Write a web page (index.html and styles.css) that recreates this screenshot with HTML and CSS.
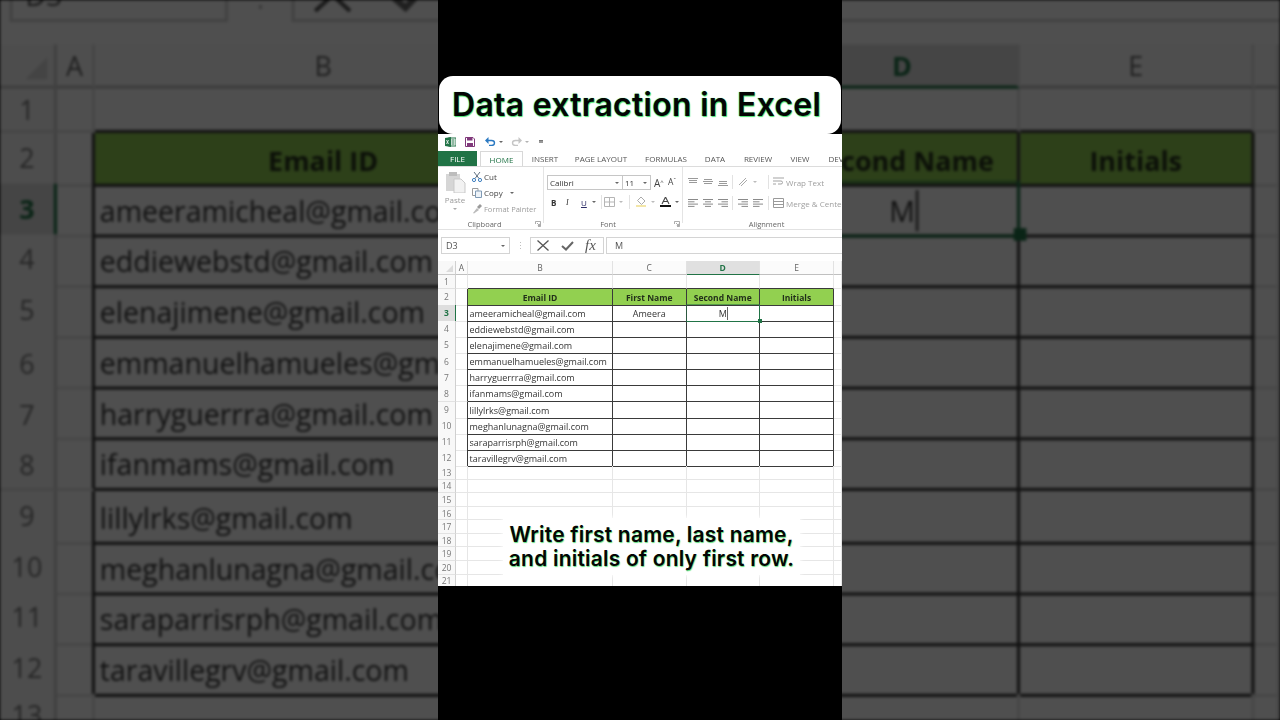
FILE: index.html
```html
<!DOCTYPE html>
<html lang="en">
<head>
<meta charset="utf-8">
<title>Data extraction in Excel</title>
<link rel="stylesheet" href="styles.css">
</head>
<body>
<svg class="defs" width="0" height="0" aria-hidden="true">
  <symbol id="al-l" viewBox="0 0 10 8"><path d="M0 .5h10M0 2.8h6.5M0 5.1h10M0 7.4h6.5" stroke="#8a8a8a" fill="none"/></symbol>
  <symbol id="al-c" viewBox="0 0 10 8"><path d="M0 .5h10M2 2.8h6M0 5.1h10M2 7.4h6" stroke="#8a8a8a" fill="none"/></symbol>
  <symbol id="al-r" viewBox="0 0 10 8"><path d="M0 .5h10M3.5 2.8h6.5M0 5.1h10M3.5 7.4h6.5" stroke="#8a8a8a" fill="none"/></symbol>
  <symbol id="va-t" viewBox="0 0 10 8"><path d="M0 .5h10M1 2.5h8M1 4.5h8" stroke="#9a9a9a" fill="none"/></symbol>
  <symbol id="va-m" viewBox="0 0 10 8"><path d="M1 1.5h8M0 3.5h10M1 5.5h8" stroke="#9a9a9a" fill="none"/></symbol>
  <symbol id="va-b" viewBox="0 0 10 8"><path d="M1 3.5h8M1 5.5h8M0 7.5h10" stroke="#9a9a9a" fill="none"/></symbol>
  <symbol id="launch" viewBox="0 0 6 6"><path d="M.5 3V.5H5.5V5.5H3M2 2l2.500 2.500M4.500 2.800V4.500H2.800" stroke="#8a8a8a" stroke-width=".7" fill="none"/></symbol>
</svg>

<div class="backdrop"></div>

<main class="stage">
  <header class="title-card"><h1 class="title">Data extraction in Excel</h1></header>

  <section class="excel" id="excel">
    <div class="qat">
      <svg class="q-xl" viewBox="0 0 11 10"><rect x="4" y="1" width="7" height="8" fill="#fff" stroke="#217346"/><path d="M6.500 3h3M6.500 5h3M6.500 7h3" stroke="#217346"/><path d="M0 1l6-1v10l-6-1z" fill="#217346"/><path d="M1.500 3l2 4M3.500 3l-2 4" stroke="#fff" stroke-width=".8"/></svg>
      <svg class="q-save" viewBox="0 0 10 10"><path d="M.5.500h7.500l1.500 1.500v7.500h-9z" fill="#fff" stroke="#80397b"/><rect x="2" y=".5" width="5.500" height="3" fill="#80397b"/><rect x="2" y="6" width="6" height="3.500" fill="#80397b"/></svg>
      <svg class="q-undo" viewBox="0 0 11 9"><path d="M1.500 3.500h5a3 2.500 0 0 1 0 5H4" fill="none" stroke="#2b79c2" stroke-width="1.400"/><path d="M0 3.500L3.500 0v7z" fill="#2b79c2"/></svg>
      <i class="mini-arrow q-a1"></i>
      <svg class="q-redo" viewBox="0 0 11 9"><path d="M9.500 3.500h-5a3 2.500 0 0 0 0 5H7" fill="none" stroke="#c5c5c5" stroke-width="1.400"/><path d="M11 3.500L7.500 0v7z" fill="#c5c5c5"/></svg>
      <i class="mini-arrow q-a2"></i>
      <span class="q-cust"></span>
    </div>

    <nav class="tabs">
      <span class="tab file">FILE</span>
      <span class="tab home">HOME</span>
      <span class="tab t-ins">INSERT</span>
      <span class="tab t-pl">PAGE LAYOUT</span>
      <span class="tab t-fm">FORMULAS</span>
      <span class="tab t-da">DATA</span>
      <span class="tab t-re">REVIEW</span>
      <span class="tab t-vi">VIEW</span>
      <span class="tab t-de">DEVELOPER</span>
    </nav>

    <div class="ribbon">
      <div class="group g-clip">
        <div class="g-body clip-body">
          <div class="paste">
            <svg class="paste-ic" viewBox="0 0 21 21"><rect x="1" y="2" width="14" height="17" fill="#d6d6d6"/><rect x="4" y="0" width="8" height="4" fill="#bdbdbd"/><path d="M9 7h7l4 4v10H9z" fill="#f2f2f2" stroke="#c9c9c9"/></svg>
            <span class="paste-t">Paste</span>
            <i class="mini-arrow"></i>
          </div>
          <div class="clip-list">
            <div class="clip-item">
              <svg class="ci" viewBox="0 0 10 10"><path d="M2 0l5 6.500M8 0L3 6.500" stroke="#5f6f80" fill="none"/><circle cx="2" cy="8" r="1.600" stroke="#3f7fbf" fill="none"/><circle cx="8" cy="8" r="1.600" stroke="#3f7fbf" fill="none"/></svg>
              <span>Cut</span>
            </div>
            <div class="clip-item">
              <svg class="ci" viewBox="0 0 10 10"><path d="M.5.500h5.500v7h-5.500z" fill="#fff" stroke="#9a9a9a"/><path d="M3.500 3h6v6.500h-6z" fill="#eef3f8" stroke="#7f9ab5"/></svg>
              <span>Copy</span><i class="mini-arrow copy-a"></i>
            </div>
            <div class="clip-item dim">
              <svg class="ci" viewBox="0 0 10 10"><path d="M1 9l4-5 2 2-5 3.500z" fill="#bbb"/><path d="M5 3l3-3 2 2-3 3z" fill="#9a9a9a"/></svg>
              <span>Format Painter</span>
            </div>
          </div>
        </div>
        <div class="g-label l-clip">Clipboard<svg class="launch"><use href="#launch"/></svg></div>
      </div>

      <div class="group g-font">
        <div class="g-body font-body">
          <div class="font-row one">
            <span class="combo c-font">Calibri<i class="mini-arrow"></i></span>
            <span class="combo c-size">11<i class="mini-arrow"></i></span>
            <span class="grow">A<sup>^</sup></span>
            <span class="grow small">A<sup>ˇ</sup></span>
          </div>
          <div class="font-row two">
            <b class="fb">B</b><em class="fb fi">I</em><u class="fb fu">U</u><i class="mini-arrow"></i>
            <span class="vsep v-a"></span>
            <svg class="fi-ic" viewBox="0 0 11 10"><path d="M.5.500h10v9H.5zM5.500.500v9M.5 5h10" stroke="#b5b5b5" fill="none"/></svg><i class="mini-arrow pale"></i>
            <span class="vsep v-b"></span>
            <svg class="fi-ic" viewBox="0 0 11 10"><path d="M5 0l4 4-3.500 3.500-4-4z" fill="none" stroke="#aaa"/><rect y="8" width="10" height="2" fill="#f3e6a8"/></svg><i class="mini-arrow pale"></i>
            <svg class="fi-ic color-ic" viewBox="0 0 11 10"><path d="M2 7l3.500-7L9 7M3.500 4.500h4" fill="none" stroke="#444" stroke-width="1.100"/><rect y="8" width="11" height="2" fill="#111"/></svg><i class="mini-arrow"></i>
          </div>
        </div>
        <div class="g-label l-font">Font<svg class="launch"><use href="#launch"/></svg></div>
      </div>

      <div class="group g-align">
        <div class="g-body align-body">
          <div class="al-row">
            <svg class="al"><use href="#va-t"/></svg><svg class="al"><use href="#va-m"/></svg><svg class="al"><use href="#va-b"/></svg>
            <span class="vsep"></span>
            <svg class="fi-ic" viewBox="0 0 11 10"><path d="M1 8l7-7M3 9l6-6" stroke="#a9a9a9" fill="none"/></svg><i class="mini-arrow pale"></i>
            <span class="vsep s2"></span>
            <svg class="fi-ic" viewBox="0 0 11 10"><path d="M0 1h11M0 4h8a1.500 1.500 0 0 1 0 3H5M0 7h3" stroke="#a3a3a3" fill="none"/></svg>
            <span class="al-t">Wrap Text</span>
          </div>
          <div class="al-row">
            <svg class="al"><use href="#al-l"/></svg><svg class="al"><use href="#al-c"/></svg><svg class="al"><use href="#al-r"/></svg>
            <span class="vsep"></span>
            <svg class="al ind"><use href="#al-r"/></svg><svg class="al ind"><use href="#al-l"/></svg>
            <span class="vsep s3"></span>
            <svg class="fi-ic" viewBox="0 0 11 10"><path d="M.5.500h10v9H.5zM.5 3.500h10M.5 6.500h10" stroke="#9a9a9a" fill="none"/></svg>
            <span class="al-t">Merge &amp; Center</span>
          </div>
        </div>
        <div class="g-label l-align">Alignment</div>
      </div>
    </div>

    <div class="fbar">
      <div class="namebox">D3<i class="mini-arrow"></i></div>
      <span class="dots">⋮</span>
      <div class="fx-box">
        <svg class="fx-x" viewBox="0 0 12 11"><path d="M.5.500l11 10M11.500.500l-11 10" stroke="#555" stroke-width="1.300" fill="none"/></svg>
        <svg class="fx-v" viewBox="0 0 13 10"><path d="M1 5l4 3.500L12 1" stroke="#666" stroke-width="2" fill="none"/></svg>
        <span class="fx-f">fx</span>
      </div>
      <div class="formula">M</div>
    </div>

    <div class="sheet">
      <div class="row colhead">
        <span class="rh corner"><i></i></span><span class="ch">A</span><span class="ch">B</span><span class="ch">C</span><span class="ch on">D</span><span class="ch">E</span><span class="ch"></span>
      </div>
      <div class="row r1"><span class="rh">1</span><span class="c"></span><span class="c tb"></span><span class="c tb"></span><span class="c tb"></span><span class="c tb"></span><span class="c"></span></div>
      <div class="row r2"><span class="rh">2</span><span class="c tl"></span><span class="c t hd">Email ID</span><span class="c t hd">First Name</span><span class="c t hd">Second Name</span><span class="c t hd">Initials</span><span class="c"></span></div>
      <div class="row rd"><span class="rh on">3</span><span class="c tl"></span><span class="c t">ameeramicheal@gmail.com</span><span class="c t mid">Ameera</span><span class="c t mid sel">M<i class="caret"></i></span><span class="c t"></span><span class="c"></span></div>
      <div class="row rd"><span class="rh">4</span><span class="c tl"></span><span class="c t">eddiewebstd@gmail.com</span><span class="c t"></span><span class="c t"></span><span class="c t"></span><span class="c"></span></div>
      <div class="row rd"><span class="rh">5</span><span class="c tl"></span><span class="c t">elenajimene@gmail.com</span><span class="c t"></span><span class="c t"></span><span class="c t"></span><span class="c"></span></div>
      <div class="row rd"><span class="rh">6</span><span class="c tl"></span><span class="c t">emmanuelhamueles@gmail.com</span><span class="c t"></span><span class="c t"></span><span class="c t"></span><span class="c"></span></div>
      <div class="row rd"><span class="rh">7</span><span class="c tl"></span><span class="c t">harryguerrra@gmail.com</span><span class="c t"></span><span class="c t"></span><span class="c t"></span><span class="c"></span></div>
      <div class="row rd"><span class="rh">8</span><span class="c tl"></span><span class="c t">ifanmams@gmail.com</span><span class="c t"></span><span class="c t"></span><span class="c t"></span><span class="c"></span></div>
      <div class="row rd"><span class="rh">9</span><span class="c tl"></span><span class="c t">lillylrks@gmail.com</span><span class="c t"></span><span class="c t"></span><span class="c t"></span><span class="c"></span></div>
      <div class="row rd"><span class="rh">10</span><span class="c tl"></span><span class="c t">meghanlunagna@gmail.com</span><span class="c t"></span><span class="c t"></span><span class="c t"></span><span class="c"></span></div>
      <div class="row rd"><span class="rh">11</span><span class="c tl"></span><span class="c t">saraparrisrph@gmail.com</span><span class="c t"></span><span class="c t"></span><span class="c t"></span><span class="c"></span></div>
      <div class="row rd"><span class="rh">12</span><span class="c tl"></span><span class="c t">taravillegrv@gmail.com</span><span class="c t"></span><span class="c t"></span><span class="c t"></span><span class="c"></span></div>
      <div class="row re"><span class="rh">13</span><span class="c"></span><span class="c"></span><span class="c"></span><span class="c"></span><span class="c"></span><span class="c"></span></div>
      <div class="row re"><span class="rh">14</span><span class="c"></span><span class="c"></span><span class="c"></span><span class="c"></span><span class="c"></span><span class="c"></span></div>
      <div class="row re"><span class="rh">15</span><span class="c"></span><span class="c"></span><span class="c"></span><span class="c"></span><span class="c"></span><span class="c"></span></div>
      <div class="row re"><span class="rh">16</span><span class="c"></span><span class="c"></span><span class="c"></span><span class="c"></span><span class="c"></span><span class="c"></span></div>
      <div class="row re"><span class="rh">17</span><span class="c"></span><span class="c"></span><span class="c"></span><span class="c"></span><span class="c"></span><span class="c"></span></div>
      <div class="row re"><span class="rh">18</span><span class="c"></span><span class="c"></span><span class="c"></span><span class="c"></span><span class="c"></span><span class="c"></span></div>
      <div class="row re"><span class="rh">19</span><span class="c"></span><span class="c"></span><span class="c"></span><span class="c"></span><span class="c"></span><span class="c"></span></div>
      <div class="row re"><span class="rh">20</span><span class="c"></span><span class="c"></span><span class="c"></span><span class="c"></span><span class="c"></span><span class="c"></span></div>
      <div class="row re"><span class="rh">21</span><span class="c"></span><span class="c"></span><span class="c"></span><span class="c"></span><span class="c"></span><span class="c"></span></div>
    </div>
  </section>

  <p class="caption">Write first name, last name,<br>and initials of only first row.</p>
</main>
<script src="script.js"></script>
</body>
</html>
```

FILE: styles.css
```css
* { box-sizing: border-box; }
html, body { margin: 0; height: 100%; }
body {
  width: 1280px; height: 720px; overflow: hidden; background: #000;
  display: flex; justify-content: center;
  font-family: "Open Sans", "Liberation Sans", sans-serif;
  position: relative;
}
.defs { position: absolute; }

/* blurred, darkened enlargement of the sheet behind the video */
.backdrop {
  position: absolute; inset: 0; overflow: hidden; background: #4f4f4f;
  filter: brightness(.31) blur(1.6px);
}
.backdrop .excel {
  position: absolute; left: 0; top: 0;
  transform-origin: 0 0;
  transform: scale(3.168) translateY(-113px);
  filter: none;
}

.stage {
  position: relative; width: 404px; height: 720px; background: #000;
  padding-top: 76px; display: flex; flex-direction: column;
}
.title-card {
  margin: 0 1px; height: 58px; background: #fff; border-radius: 14px;
  display: flex; align-items: center; padding-left: 13px; flex: none;
  position: relative; z-index: 1;
}
.title {
  margin: 0; font: 600 32px/1 "Inter", sans-serif; letter-spacing: .27px; color: #050505; white-space: nowrap;
  text-shadow: .6px .6px 1px #45e36d, -.4px 0 1px #45e36d;
}

.excel {
  width: 404px; height: 452px; background: #fff; overflow: hidden; flex: none;
  display: flex; flex-direction: column; color: #444;
  filter: blur(.4px);
}

/* quick access */
.qat { height: 17px; display: flex; align-items: center; flex: none; padding: 0 0 2px 7px; }
.qat svg { display: block; flex: none; }
.q-xl { width: 11px; height: 10px; }
.q-save { width: 10px; height: 10px; margin-left: 9px; }
.q-undo { width: 11px; height: 9px; margin-left: 10px; }
.q-a1 { margin-left: 3px; }
.q-redo { width: 11px; height: 9px; margin-left: 8px; }
.q-a2 { margin-left: 3px; opacity: .5; }
.q-cust { width: 4px; height: 3px; margin-left: 10px; border-top: 1px solid #777; border-bottom: 2px solid #999; }
.mini-arrow {
  display: inline-block; width: 0; height: 0; flex: none;
  border-left: 2px solid transparent; border-right: 2px solid transparent; border-top: 2px solid #666;
}
.mini-arrow.pale { border-top-color: #bbb; }

/* tabs */
.tabs {
  height: 16px; flex: none; display: flex; align-items: stretch; white-space: nowrap;
  border-bottom: 1px solid #dcdcdc; overflow: hidden; font-size: 8px; color: #555;
}
.tab { display: flex; align-items: center; justify-content: center; flex: none; }
.file { width: 39px; background: #217346; color: #fff; }
.home {
  width: 43px; margin-left: 3px; background: #fff; color: #217346;
  border: 1px solid #d8d8d8; border-bottom: 0; height: 16px;
}
.t-ins { margin-left: 10px; width: 24px; }
.t-pl { margin-left: 19px; width: 50px; }
.t-fm { margin-left: 19px; width: 42px; }
.t-da { margin-left: 18px; width: 20px; }
.t-re { margin-left: 19px; width: 28px; }
.t-vi { margin-left: 19px; width: 18px; }
.t-de { margin-left: 19px; width: 45px; }

/* ribbon */
.ribbon { height: 63px; flex: none; display: flex; border-bottom: 1px solid #e2e2e2; font-size: 8px; }
.group { position: relative; display: flex; flex-direction: column; flex: none; padding-top: 4px; border-right: 1px solid #e4e4e4; margin-bottom: 7px; height: 56px; }
.g-body { flex: 1; }
.g-label {
  position: absolute; left: 0; right: 0; top: 51px; text-align: center; font-size: 7.5px; line-height: 12px; color: #666;
}
.l-clip { padding-right: 12px; }
.l-font { padding-right: 10px; }
.l-align { padding-left: 8px; }
.launch { position: absolute; right: 2px; top: 3px; width: 6px; height: 6px; }
.g-clip { width: 106px; }
.clip-body { display: flex; }
.paste { width: 34px; display: flex; flex-direction: column; align-items: center; color: #9a9a9a; font-size: 8px; }
.paste-ic { width: 21px; height: 21px; margin-top: 1px; }
.paste-t { margin-top: 1px; line-height: 11px; }
.paste .mini-arrow { margin-top: 3px; border-top-color: #aaa; }
.clip-list { display: flex; flex-direction: column; gap: 5px; }
.clip-item { display: flex; align-items: center; gap: 2px; height: 11px; }
.clip-item .ci { width: 10px; height: 10px; flex: none; }
.clip-item.dim { color: #9c9c9c; }
.clip-item.dim span { font-size: 7.5px; }
.copy-a { margin-left: 5px; }

.g-font { width: 139px; }
.font-body { padding-left: 3px; }
.font-row { display: flex; align-items: center; }
.font-row.one { height: 15px; margin-top: 4px; }
.font-row.two { margin-top: 5px; height: 14px; padding-left: 4px; }
.combo {
  height: 15px; border: 1px solid #c6c6c6; display: flex; align-items: center;
  justify-content: space-between; padding: 0 3px 0 2px; color: #333;
}
.c-font { width: 76px; }
.c-size { width: 28px; border-left: 0; }
.grow { font-size: 10px; line-height: 1; margin-left: 3px; width: 11px; color: #444; white-space: nowrap; }
.grow sup { font-size: 6px; vertical-align: 3px; line-height: 0; }
.grow.small { font-size: 8.5px; margin-left: 3px; }
.fb { font-size: 8px; color: #333; width: 15px; text-align: left; font-style: normal; }
.fi { font-style: italic; font-family: "Liberation Serif", serif; }
.fu { width: 11px; color: #2c2c66; }
.vsep { width: 1px; height: 14px; background: #e2e2e2; margin: 0 5px 0 6px; flex: none; }
.v-a { margin: 0 2px 0 5px; }
.v-b { margin: 0 6px 0 6px; }
.fi-ic { width: 11px; height: 10px; flex: none; margin-right: 4px; display: block; }
.color-ic { margin-left: 5px; }

.g-align { width: 159px; border-right: 0; }
.align-body { padding: 0 0 0 5px; display: flex; flex-direction: column; gap: 7px; margin-top: 4px; }
.al-row { display: flex; align-items: center; height: 14px; color: #a0a0a0; white-space: nowrap; }
.al { width: 10px; height: 8px; margin-right: 5px; flex: none; display: block; }
.al-row > .vsep { margin: 0 5px 0 -1px; }
.al-row > .vsep.s2 { margin: 0 4px 0 11px; }
.al-row > .vsep.s3 { margin: 0 4px 0 0; }
.al-t { margin-left: -2px; font-size: 8px; }

/* formula bar */
.fbar { margin-top: 7px; height: 17px; flex: none; display: flex; align-items: stretch; padding-left: 3px; font-size: 9px; color: #555; }
.namebox { width: 69px; border: 1px solid #d4d4d4; display: flex; align-items: center; justify-content: space-between; padding: 0 4px; }
.dots { width: 20px; text-align: center; color: #bbb; line-height: 17px; }
.fx-box { width: 74px; border: 1px solid #d4d4d4; display: flex; align-items: center; padding-left: 6px; }
.fx-x { width: 12px; height: 11px; }
.fx-v { width: 13px; height: 10px; margin-left: 12px; }
.fx-f { font: italic 15px "Liberation Serif", serif; color: #555; margin-left: 11px; }
.formula { flex: 1; margin-left: 2px; border: 1px solid #d4d4d4; border-right: 0; padding-left: 8px; display: flex; align-items: center; }

/* sheet */
.sheet { margin-top: 7px; flex: 1; overflow: hidden; }
.row { display: grid; grid-template-columns: 18px 12px 145px 73.500px 73.500px 74px 1fr; }
.colhead { height: 14px; }
.r1 { height: 13.700px; }
.r2 { height: 16px; }
.rd { height: 16.150px; }
.re { height: 13.570px; }
.rh { background: #f8f8f8; border-right: 1px solid #d0d0d0; border-bottom: 1px solid #e2e2e2; font-size: 8.500px; color: #777; display: flex; align-items: center; justify-content: center; }
.rh.on { background: #dedede; color: #217346; font-weight: 700; border-right: 1px solid #217346; }
.corner { position: relative; border-bottom: 1px solid #c8c8c8; }
.corner i { position: absolute; right: 2px; bottom: 2px; width: 0; height: 0; border-left: 7px solid transparent; border-bottom: 7px solid #dcdcdc; }
.ch { background: #fbfbfb; border-right: 1px solid #e2e2e2; border-bottom: 1px solid #c0c0c0; font-size: 8.500px; color: #666; text-align: center; line-height: 13px; }
.ch.on { background: #e0e0e0; color: #217346; font-weight: 700; border-bottom: 1px solid #217346; }
.c {
  border-right: 1px solid #e6e6e6; border-bottom: 1px solid #e6e6e6; font-size: 9px; color: #333;
  padding-left: 1.500px; line-height: 15px; white-space: nowrap; min-width: 0; position: relative;
}
.c.tb { border-bottom-color: #3a3a3a; }
.c.tl { border-right-color: #3a3a3a; }
.c.t { border-right-color: #3a3a3a; border-bottom-color: #3a3a3a; padding-top: 1px; }
.c.hd { background: #92d050; font-weight: 700; text-align: center; font-size: 8.500px; padding: 1px 0 0; color: #22301a; }
.c.mid { text-align: center; padding-left: 0; }
.sel { z-index: 2; }
.sel::after { content: ""; position: absolute; inset: -1px -1px -1px -1px; border: 1px solid rgba(33,115,70,.55); border-bottom: 1.500px solid #217346; border-right: 1.500px solid #217346; pointer-events: none; }
.sel::before { content: ""; position: absolute; right: -2.500px; bottom: -2.500px; width: 4px; height: 4px; background: #217346; z-index: 3; }
.caret { position: absolute; left: 40.500px; top: 2px; width: .6px; height: 13px; background: #666; }

.caption {
  position: absolute; left: 65px; top: 518px; width: 297px; height: 57px; margin: 0;
  background: #fff; box-shadow: 0 0 4px 1px rgba(255,255,255,.9);
  font: 600 21px/24px "Inter", sans-serif; letter-spacing: .2px; color: #050505; text-align: center; padding-top: 5px; white-space: nowrap;
  text-shadow: .5px .5px 1px #5be07c;
}
```

FILE: script.js
```js
document.querySelector('.backdrop').appendChild(document.getElementById('excel').cloneNode(true)).removeAttribute('id');
```
